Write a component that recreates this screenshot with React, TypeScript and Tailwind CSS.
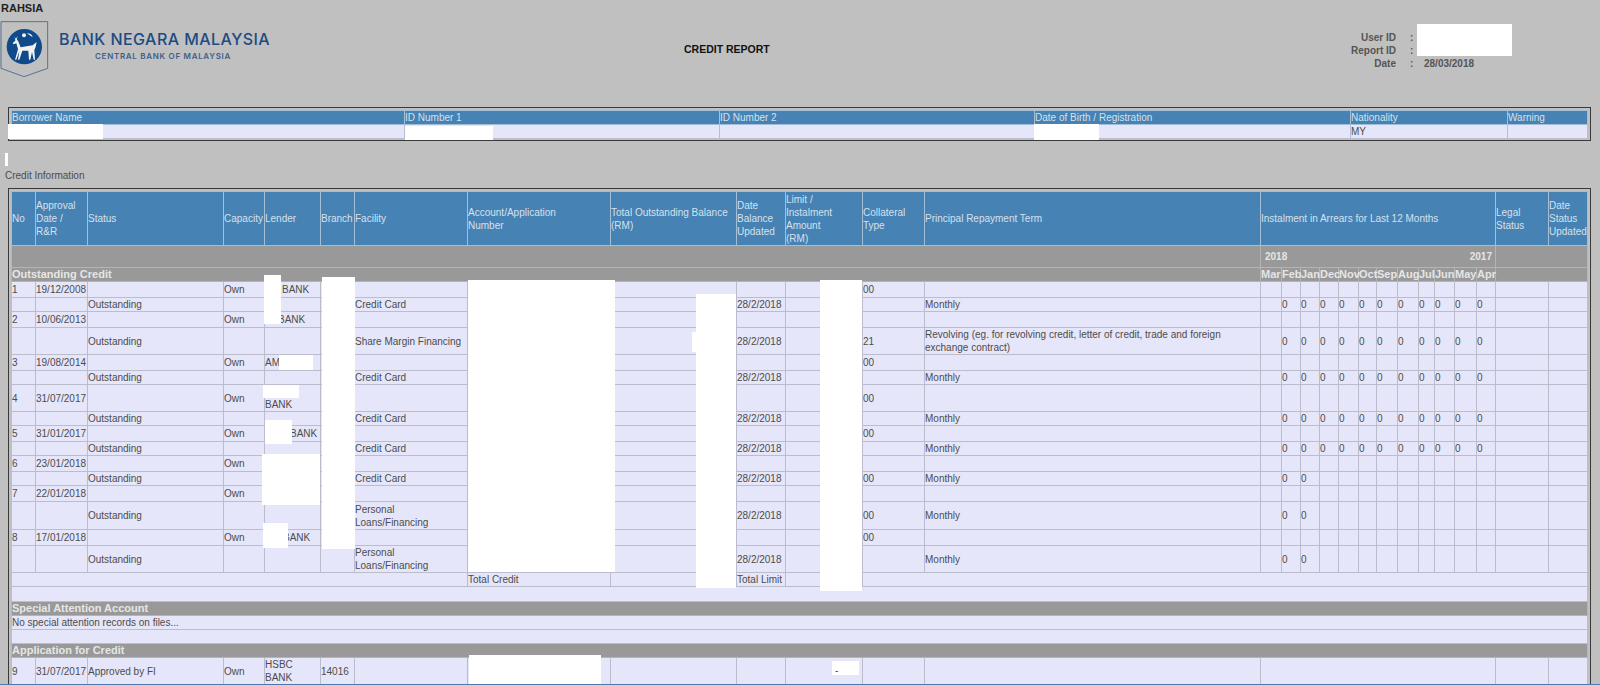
import type { ReactNode } from 'react'

const td = 'border border-[#bcbdcc] p-0 align-middle'
const th = 'border border-[#a3bfd8] bg-[#4682b4] p-0 text-left align-middle font-normal text-[#d5e1ec]'
const band = 'border border-[#b4b4b4] bg-[#999999] p-0 text-left align-middle font-bold text-[#e6e6e6]'

const months = ['Mar', 'Feb', 'Jan', 'Dec', 'Nov', 'Oct', 'Sep', 'Aug', 'Jul', 'Jun', 'May', 'Apr']

type Entry = {
  no: string
  date: string
  lender?: ReactNode
  lenderClass?: string
  mainH: string
  detailH: string
  facility: ReactNode
  term: ReactNode
  zeros: number
  mainColl?: string
  detailColl?: string
}

const entries: Entry[] = [
  { no: '1', date: '19/12/2008', lender: 'BANK', lenderClass: 'pl-[17px]', mainH: 'h-[16px]', detailH: 'h-[14px]', facility: 'Credit Card', term: 'Monthly', zeros: 11, mainColl: '00' },
  { no: '2', date: '10/06/2013', lender: 'BANK', lenderClass: 'pl-[13px]', mainH: 'h-[16px]', detailH: 'h-[27px]', facility: 'Share Margin Financing', term: <>Revolving (eg. for revolving credit, letter of credit, trade and foreign<br />exchange contract)</>, zeros: 11, detailColl: '21' },
  { no: '3', date: '19/08/2014', lender: 'AM', mainH: 'h-[16px]', detailH: 'h-[14px]', facility: 'Credit Card', term: 'Monthly', zeros: 11, mainColl: '00' },
  { no: '4', date: '31/07/2017', lender: <><br />BANK</>, mainH: 'h-[27px]', detailH: 'h-[14px]', facility: 'Credit Card', term: 'Monthly', zeros: 11, mainColl: '00' },
  { no: '5', date: '31/01/2017', lender: 'BANK', lenderClass: 'pl-[25px]', mainH: 'h-[16px]', detailH: 'h-[14px]', facility: 'Credit Card', term: 'Monthly', zeros: 11, mainColl: '00' },
  { no: '6', date: '23/01/2018', mainH: 'h-[16px]', detailH: 'h-[14px]', facility: 'Credit Card', term: 'Monthly', zeros: 2, detailColl: '00' },
  { no: '7', date: '22/01/2018', mainH: 'h-[16px]', detailH: 'h-[28px]', facility: <>Personal<br />Loans/Financing</>, term: 'Monthly', zeros: 2, detailColl: '00' },
  { no: '8', date: '17/01/2018', lender: 'BANK', lenderClass: 'pl-[18px]', mainH: 'h-[16px]', detailH: 'h-[27px]', facility: <>Personal<br />Loans/Financing</>, term: 'Monthly', zeros: 2, mainColl: '00' },
]

function Crest() {
  return (
    <svg className="block h-[70px] w-[50px]" viewBox="0 0 150 210">
      <path d="M3 35H143V175L72 200L3 175Z" fill="none" stroke="#3e6387" strokeWidth="2.5" />
      <circle cx="73" cy="110" r="53" fill="#0f4a8a" />
      <path
        d="M38 99L46 92L44 80L48 87L52 78L51 90L54 92L62 112L98 106L110 96L107 110L103 120L105 149L101 149L96 126L91 149L87 149L85 122L67 122L58 149L54 149L58 124L49 149L45 149L54 118L49 100L41 103Z"
        fill="#f2f2f2"
      />
      <circle cx="72" cy="76" r="6" fill="#f2f2f2" />
      <path d="M80 70Q96 70 98 82Q90 76 80 70Z" fill="#f2f2f2" />
    </svg>
  )
}

function Patch({ className, children }: { className: string; children?: ReactNode }) {
  return <div className={`absolute bg-white ${className}`}>{children}</div>
}

function EntryRows({ entry }: { entry: Entry }) {
  return (
    <>
      <tr className={entry.mainH}>
        <td className={td}>{entry.no}</td>
        <td className={td}>{entry.date}</td>
        <td className={td} />
        <td className={td}>Own</td>
        <td className={`${td} ${entry.lenderClass ?? ''}`}>{entry.lender}</td>
        <td className={td} />
        <td className={td} />
        <td className={td} />
        <td className={td} />
        <td className={td} />
        <td className={td} />
        <td className={td}>{entry.mainColl}</td>
        <td className={td} />
        {months.map((m) => <td key={m} className={td} />)}
        <td className={td} />
        <td className={td} />
      </tr>
      <tr className={entry.detailH}>
        <td className={td} />
        <td className={td} />
        <td className={td}>Outstanding</td>
        <td className={td} />
        <td className={td} />
        <td className={td} />
        <td className={td}>{entry.facility}</td>
        <td className={td} />
        <td className={td} />
        <td className={td}>28/2/2018</td>
        <td className={td} />
        <td className={td}>{entry.detailColl}</td>
        <td className={td}>{entry.term}</td>
        {months.map((m, i) => (
          <td key={m} className={td}>{i >= 1 && i <= entry.zeros ? '0' : ''}</td>
        ))}
        <td className={td} />
        <td className={td} />
      </tr>
    </>
  )
}

export default function App() {
  return (
    <div className="relative h-[685px] w-[1600px] overflow-hidden bg-[#c0c0c0] font-['Liberation_Sans',Arial,sans-serif] text-[10px] leading-[13px] text-[#4c4c4c]">
      <div className="h-[15px] pl-px pt-[3px] text-[11px] leading-[11px] font-bold text-[#222]">RAHSIA</div>

      <div className="flex h-[92px] items-start">
        <div className="-mt-[5px] w-[59px] shrink-0"><Crest /></div>
        <div className="w-[625px] shrink-0 pt-[15px]">
          <div className="text-[16px] leading-[19px] font-medium tracking-[0.45px] text-[#1d4b82] font-['Inter',sans-serif]">BANK NEGARA MALAYSIA</div>
          <div className="mt-[2px] pl-[36px] text-[8px] leading-[10px] font-semibold tracking-[0.7px] text-[#3d5f8a] font-['Inter',sans-serif]">CENTRAL BANK OF MALAYSIA</div>
        </div>
        <div className="w-[300px] shrink-0 pt-[28px] text-[10.5px] font-bold text-[#111]">CREDIT REPORT</div>
        <div className="ml-[320px] mt-[15.5px] grid grid-cols-[92px_28px_100px] font-bold text-[#555]">
          <span className="text-right">User ID</span><span className="pl-[14px]">:</span><span />
          <span className="text-right">Report ID</span><span className="pl-[14px]">:</span><span />
          <span className="text-right">Date</span><span className="pl-[14px]">:</span><span>28/03/2018</span>
        </div>
      </div>

      <div className="ml-[8px] h-[34px] w-[1583px] border border-[#3a3a3a] pl-[2px] pt-[2px]">
        <table className="w-[1576px] table-fixed border-collapse">
          <colgroup>
            <col className="w-[393px]" />
            <col className="w-[315px]" />
            <col className="w-[315px]" />
            <col className="w-[316px]" />
            <col className="w-[157px]" />
            <col className="w-[80px]" />
          </colgroup>
          <tbody>
            <tr className="h-[14px]">
              {['Borrower Name', 'ID Number 1', 'ID Number 2', 'Date of Birth / Registration', 'Nationality', 'Warning'].map((label) => (
                <th key={label} className={th}>{label}</th>
              ))}
            </tr>
            <tr className="h-[14px] bg-[#e6e6fa]">
              <td className={td} />
              <td className={td} />
              <td className={td} />
              <td className={td} />
              <td className={td}>MY</td>
              <td className={td} />
            </tr>
          </tbody>
        </table>
      </div>

      <div className="ml-[5px] mt-[12px] h-[13px] w-[3px] bg-white" />
      <div className="ml-[5px] mt-[3px] h-[13px]">Credit Information</div>
      <div className="h-[6px]" />

      <div className="ml-[8px] w-[1583px] border-x border-t border-[#3a3a3a] pl-[2px] pt-[2px]">
        <table className="w-[1576px] table-fixed border-collapse whitespace-nowrap bg-[#e6e6fa]">
          <colgroup>
            <col className="w-[24px]" />
            <col className="w-[52px]" />
            <col className="w-[136px]" />
            <col className="w-[41px]" />
            <col className="w-[56px]" />
            <col className="w-[34px]" />
            <col className="w-[113px]" />
            <col className="w-[143px]" />
            <col className="w-[126px]" />
            <col className="w-[49px]" />
            <col className="w-[77px]" />
            <col className="w-[62px]" />
            <col className="w-[336px]" />
            <col className="w-[21px]" />
            <col className="w-[19px]" />
            <col className="w-[19px]" />
            <col className="w-[19px]" />
            <col className="w-[20px]" />
            <col className="w-[18px]" />
            <col className="w-[21px]" />
            <col className="w-[21px]" />
            <col className="w-[16px]" />
            <col className="w-[20px]" />
            <col className="w-[22px]" />
            <col className="w-[19px]" />
            <col className="w-[53px]" />
            <col className="w-[39px]" />
          </colgroup>
          <tbody>
            <tr className="h-[54px]">
              <th className={th}>No</th>
              <th className={th}>Approval<br />Date /<br />R&amp;R</th>
              <th className={th}>Status</th>
              <th className={th}>Capacity</th>
              <th className={th}>Lender</th>
              <th className={th}>Branch</th>
              <th className={th}>Facility</th>
              <th className={th}>Account/Application<br />Number</th>
              <th className={th}>Total Outstanding Balance<br />(RM)</th>
              <th className={th}>Date<br />Balance<br />Updated</th>
              <th className={th}>Limit /<br />Instalment<br />Amount<br />(RM)</th>
              <th className={th}>Collateral<br />Type</th>
              <th className={th}>Principal Repayment Term</th>
              <th className={th} colSpan={12}>Instalment in Arrears for Last 12 Months</th>
              <th className={th}>Legal<br />Status</th>
              <th className={th}>Date<br />Status<br />Updated</th>
            </tr>
            <tr className="h-[22px]">
              <td className={band} colSpan={13} />
              <td className={`${band} pl-[4px] pr-[3px]`} colSpan={12}>
                <div className="flex justify-between"><span>2018</span><span>2017</span></div>
              </td>
              <td className={band} colSpan={2} />
            </tr>
            <tr className="h-[14px] text-[11px]">
              <td className={band} colSpan={13}>Outstanding Credit</td>
              {months.map((m) => <td key={m} className={band}>{m}</td>)}
              <td className={band} colSpan={2} />
            </tr>

            {entries.map((entry) => <EntryRows key={entry.no} entry={entry} />)}

            <tr className="h-[14px]">
              <td className={td} colSpan={7} />
              <td className={td}>Total Credit</td>
              <td className={td} />
              <td className={td}>Total Limit</td>
              <td className={td} />
              <td className={td} colSpan={16} />
            </tr>
            <tr className="h-[15px]"><td className={td} colSpan={27} /></tr>
            <tr className="h-[14px] text-[11px]"><td className={band} colSpan={27}>Special Attention Account</td></tr>
            <tr className="h-[14px]"><td className={td} colSpan={27}>No special attention records on files...</td></tr>
            <tr className="h-[14px]"><td className={td} colSpan={27} /></tr>
            <tr className="h-[14px] text-[11px]"><td className={band} colSpan={27}>Application for Credit</td></tr>
            <tr className="h-[27px]">
              <td className={td}>9</td>
              <td className={td}>31/07/2017</td>
              <td className={td}>Approved by FI</td>
              <td className={td}>Own</td>
              <td className={td}>HSBC<br />BANK</td>
              <td className={td}>14016</td>
              <td className={td} />
              <td className={td} />
              <td className={td} />
              <td className={td} />
              <td className={td} />
              <td className={td} />
              <td className={td} />
              <td className={td} colSpan={12} />
              <td className={td} />
              <td className={td} />
            </tr>
          </tbody>
        </table>
      </div>

      {/* redacted areas painted over the report */}
      <Patch className="left-[1417px] top-[24px] h-[32px] w-[95px]" />
      <Patch className="left-[8px] top-[124px] h-[15px] w-[95px]" />
      <Patch className="left-[405px] top-[126px] h-[14px] w-[88px]" />
      <Patch className="left-[1034px] top-[124px] h-[16px] w-[65px]" />
      <Patch className="left-[264px] top-[275px] h-[49px] w-[17px]" />
      <Patch className="left-[322px] top-[277px] h-[272px] w-[33px]" />
      <Patch className="left-[468px] top-[280px] h-[292px] w-[147px]" />
      <Patch className="left-[696px] top-[294px] h-[294px] w-[40px]" />
      <Patch className="left-[692px] top-[332px] h-[20px] w-[4px]" />
      <Patch className="left-[820px] top-[280px] h-[311px] w-[42px]" />
      <Patch className="left-[279px] top-[355px] h-[15px] w-[34px]" />
      <Patch className="left-[263px] top-[385px] h-[13px] w-[36px]" />
      <Patch className="left-[265px] top-[420px] h-[24px] w-[27px]" />
      <Patch className="left-[262px] top-[454px] h-[51px] w-[58px]" />
      <Patch className="left-[263px] top-[523px] h-[25px] w-[25px]" />
      <Patch className="left-[469px] top-[655px] h-[30px] w-[132px]" />
      <Patch className="left-[832px] top-[661px] h-[14px] w-[27px] pl-[3px] pt-[3px]">-</Patch>

      <div className="absolute inset-x-0 bottom-0 h-px bg-[#4a7ba8]" />
    </div>
  )
}
